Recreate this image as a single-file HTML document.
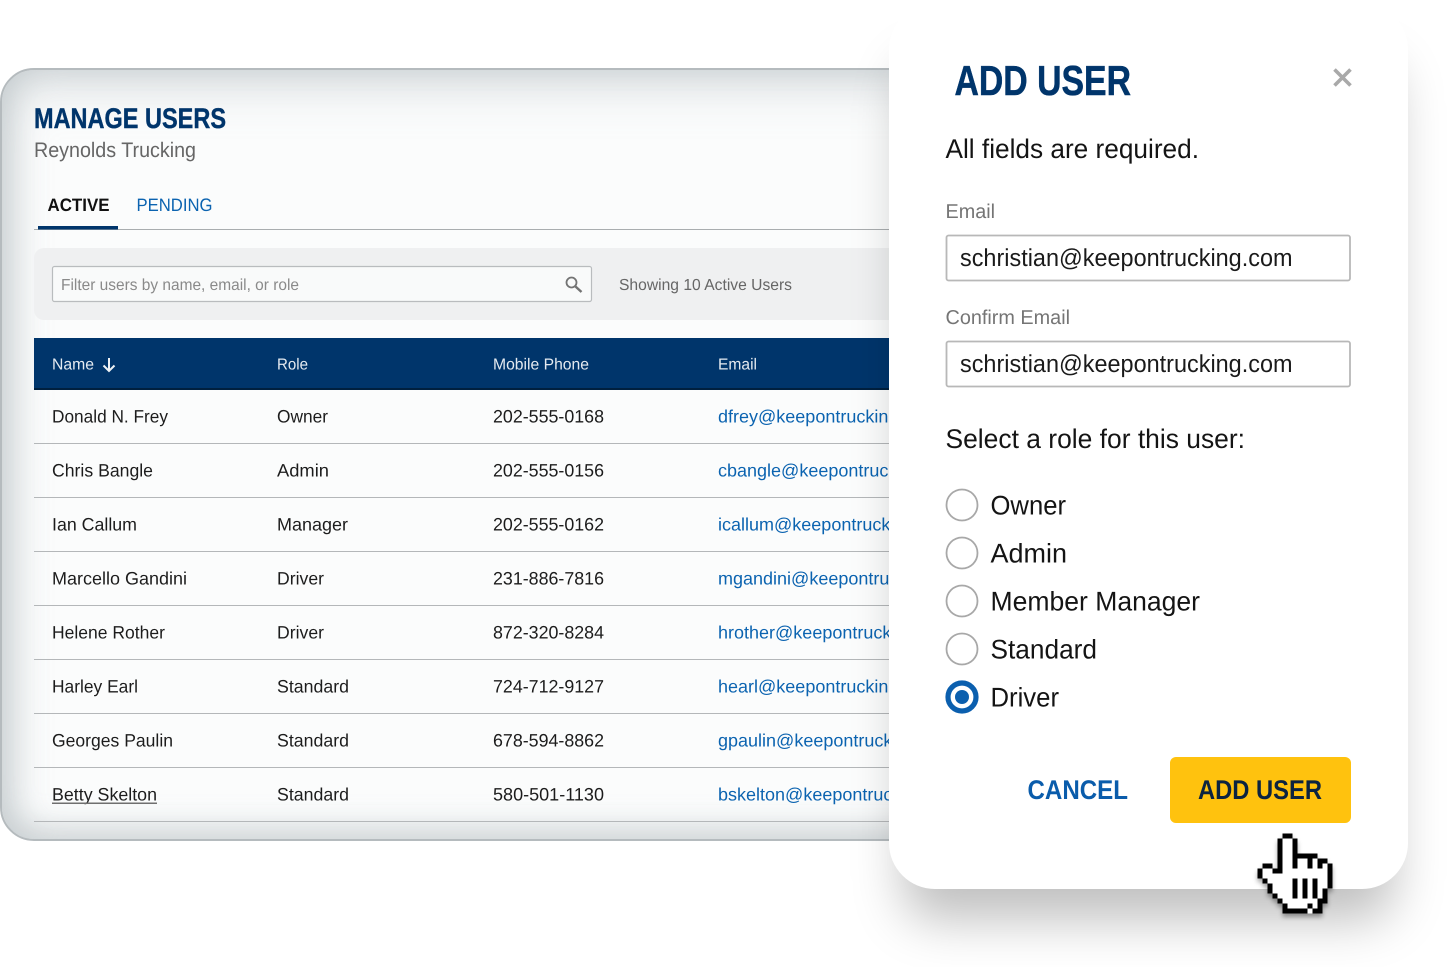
<!DOCTYPE html>
<html lang="en">
<head>
<meta charset="utf-8">
<title>Manage Users</title>
<style>
html,body{margin:0;padding:0;background:#fff;width:1452px;height:967px;overflow:hidden}
#panel{position:absolute;left:0;top:68px;width:1000px;height:773px;box-sizing:border-box;border:2px solid #b5bbbe;border-radius:34px;background:#fbfcfc;box-shadow:inset 0 16px 48px rgba(175,184,188,.42),inset 12px 0 32px rgba(175,184,188,.34),inset 0 -12px 30px rgba(175,184,188,.34)}
#modal{position:absolute;left:889px;top:3px;width:519px;height:886px;background:#fff;border-radius:46px;box-shadow:0 45px 50px -14px rgba(0,0,0,.25)}
svg{position:absolute;left:0;top:0}
text{font-family:"Liberation Sans",Arial,sans-serif;text-rendering:geometricPrecision}
.t{font-size:18px;fill:#1c1c1c}
.e{font-size:18px;fill:#0b63b0}
.h{font-size:16px;fill:#e4eaf0}
.l{font-size:27px;fill:#141414}
</style>
</head>
<body>
<div id="panel"></div>
<svg width="1452" height="967" viewBox="0 0 1452 967">
  <text x="34" y="128" font-size="28.500" font-weight="700" fill="#00356b" stroke="#00356b" stroke-width=".4" textLength="192" lengthAdjust="spacingAndGlyphs">MANAGE USERS</text>
  <text x="34" y="157" font-size="21" fill="#666" textLength="162" lengthAdjust="spacingAndGlyphs">Reynolds Trucking</text>
  <text x="47.500" y="211" font-size="18" font-weight="700" fill="#111" textLength="62" lengthAdjust="spacingAndGlyphs">ACTIVE</text>
  <text x="136.500" y="211" font-size="18" fill="#0b63b0" textLength="76" lengthAdjust="spacingAndGlyphs">PENDING</text>
  <rect x="34" y="229" width="860" height="1" fill="#a9adaf"/>
  <rect x="38" y="226" width="80" height="3.500" fill="#00356b"/>
  <rect x="34" y="248" width="880" height="72" rx="10" fill="#eff0f1"/>
  <rect x="52.500" y="266.500" width="539" height="35" rx="2" fill="#f9fafa" stroke="#b9bcbe" stroke-width="1.200"/>
  <text x="61" y="290" font-size="16" fill="#8a8a8a" textLength="238" lengthAdjust="spacingAndGlyphs">Filter users by name, email, or role</text>
  <circle cx="571.500" cy="282.500" r="5" fill="none" stroke="#737373" stroke-width="1.800"/>
  <path d="M575.500 286.500L581.500 292" fill="none" stroke="#737373" stroke-width="2.400"/>
  <text x="619" y="290" font-size="16" fill="#666" textLength="173" lengthAdjust="spacingAndGlyphs">Showing 10 Active Users</text>

  <rect x="34" y="338" width="860" height="50" fill="#00356b"/>
  <rect x="34" y="388" width="860" height="2" fill="#00203f"/>
  <text class="h" x="52" y="369.500" textLength="42" lengthAdjust="spacingAndGlyphs">Name</text>
  <path d="M109 358V371M103.500 365.500L109 371L114.500 365.500" fill="none" stroke="#eef2f5" stroke-width="2"/>
  <text class="h" x="277" y="369.500" textLength="31" lengthAdjust="spacingAndGlyphs">Role</text>
  <text class="h" x="493" y="369.500" textLength="96" lengthAdjust="spacingAndGlyphs">Mobile Phone</text>
  <text class="h" x="718" y="369.500" textLength="39" lengthAdjust="spacingAndGlyphs">Email</text>

  <g fill="#b4b7b9">
    <rect x="34" y="443" width="860" height="1"/><rect x="34" y="497" width="860" height="1"/>
    <rect x="34" y="551" width="860" height="1"/><rect x="34" y="605" width="860" height="1"/>
    <rect x="34" y="659" width="860" height="1"/><rect x="34" y="713" width="860" height="1"/>
    <rect x="34" y="767" width="860" height="1"/><rect x="34" y="821" width="860" height="1"/>
  </g>

  <text class="t" x="52" y="422.500" textLength="116" lengthAdjust="spacingAndGlyphs">Donald N. Frey</text>
  <text class="t" x="277" y="422.500" textLength="51" lengthAdjust="spacingAndGlyphs">Owner</text>
  <text class="t" x="493" y="422.500" textLength="111" lengthAdjust="spacingAndGlyphs">202-555-0168</text>
  <text class="e" x="718" y="422.500">dfrey@keepontrucking.com</text>

  <text class="t" x="52" y="476.500" textLength="101" lengthAdjust="spacingAndGlyphs">Chris Bangle</text>
  <text class="t" x="277" y="476.500" textLength="52" lengthAdjust="spacingAndGlyphs">Admin</text>
  <text class="t" x="493" y="476.500" textLength="111" lengthAdjust="spacingAndGlyphs">202-555-0156</text>
  <text class="e" x="718" y="476.500">cbangle@keepontrucking.com</text>

  <text class="t" x="52" y="530.500" textLength="85" lengthAdjust="spacingAndGlyphs">Ian Callum</text>
  <text class="t" x="277" y="530.500" textLength="71" lengthAdjust="spacingAndGlyphs">Manager</text>
  <text class="t" x="493" y="530.500" textLength="111" lengthAdjust="spacingAndGlyphs">202-555-0162</text>
  <text class="e" x="718" y="530.500">icallum@keepontrucking.com</text>

  <text class="t" x="52" y="584.500" textLength="135" lengthAdjust="spacingAndGlyphs">Marcello Gandini</text>
  <text class="t" x="277" y="584.500" textLength="47" lengthAdjust="spacingAndGlyphs">Driver</text>
  <text class="t" x="493" y="584.500" textLength="111" lengthAdjust="spacingAndGlyphs">231-886-7816</text>
  <text class="e" x="718" y="584.500">mgandini@keepontrucking.com</text>

  <text class="t" x="52" y="638.500" textLength="113" lengthAdjust="spacingAndGlyphs">Helene Rother</text>
  <text class="t" x="277" y="638.500" textLength="47" lengthAdjust="spacingAndGlyphs">Driver</text>
  <text class="t" x="493" y="638.500" textLength="111" lengthAdjust="spacingAndGlyphs">872-320-8284</text>
  <text class="e" x="718" y="638.500">hrother@keepontrucking.com</text>

  <text class="t" x="52" y="692.500" textLength="86" lengthAdjust="spacingAndGlyphs">Harley Earl</text>
  <text class="t" x="277" y="692.500" textLength="72" lengthAdjust="spacingAndGlyphs">Standard</text>
  <text class="t" x="493" y="692.500" textLength="111" lengthAdjust="spacingAndGlyphs">724-712-9127</text>
  <text class="e" x="718" y="692.500">hearl@keepontrucking.com</text>

  <text class="t" x="52" y="746.500" textLength="121" lengthAdjust="spacingAndGlyphs">Georges Paulin</text>
  <text class="t" x="277" y="746.500" textLength="72" lengthAdjust="spacingAndGlyphs">Standard</text>
  <text class="t" x="493" y="746.500" textLength="111" lengthAdjust="spacingAndGlyphs">678-594-8862</text>
  <text class="e" x="718" y="746.500">gpaulin@keepontrucking.com</text>

  <text class="t" x="52" y="800.500" textLength="105" lengthAdjust="spacingAndGlyphs">Betty Skelton</text>
  <rect x="52" y="802.500" width="105" height="1.500" fill="#6f6f6f"/>
  <text class="t" x="277" y="800.500" textLength="72" lengthAdjust="spacingAndGlyphs">Standard</text>
  <text class="t" x="493" y="800.500" textLength="111" lengthAdjust="spacingAndGlyphs">580-501-1130</text>
  <text class="e" x="718" y="800.500">bskelton@keepontrucking.com</text>
</svg>

<div id="modal"></div>

<svg width="1452" height="967" viewBox="0 0 1452 967">
  <defs>
    <filter id="hs" x="-30%" y="-30%" width="160%" height="170%">
      <feDropShadow dx="0" dy=".7" stdDeviation=".5" flood-color="#000" flood-opacity=".35"/>
    </filter>
  </defs>
  <text x="954.500" y="95" font-size="42" font-weight="700" fill="#00356b" stroke="#00356b" stroke-width=".5" textLength="176.500" lengthAdjust="spacingAndGlyphs">ADD USER</text>
  <path d="M1334.500 69.500L1350.500 85.500M1350.500 69.500L1334.500 85.500" stroke="#a9a9a9" stroke-width="3.600" fill="none"/>
  <text class="l" x="945.500" y="158" textLength="253.500" lengthAdjust="spacingAndGlyphs">All fields are required.</text>

  <text x="945.500" y="218" font-size="20" fill="#757575" textLength="49.500" lengthAdjust="spacingAndGlyphs">Email</text>
  <rect x="946.500" y="235.500" width="403.500" height="45" rx="2" fill="#fff" stroke="#b8b8b8" stroke-width="1.800"/>
  <text x="960" y="266" font-size="24.500" fill="#1a1a1a" textLength="332.500" lengthAdjust="spacingAndGlyphs">schristian@keepontrucking.com</text>

  <text x="945.500" y="324" font-size="20" fill="#757575" textLength="124.500" lengthAdjust="spacingAndGlyphs">Confirm Email</text>
  <rect x="946.500" y="341.500" width="403.500" height="45" rx="2" fill="#fff" stroke="#b8b8b8" stroke-width="1.800"/>
  <text x="960" y="372" font-size="24.500" fill="#1a1a1a" textLength="332.500" lengthAdjust="spacingAndGlyphs">schristian@keepontrucking.com</text>

  <text class="l" x="945.500" y="448" textLength="299.500" lengthAdjust="spacingAndGlyphs">Select a role for this user:</text>

  <g fill="#fff" stroke="#a8a8a8" stroke-width="1.800">
    <circle cx="962" cy="505" r="15.500"/>
    <circle cx="962" cy="553" r="15.500"/>
    <circle cx="962" cy="601" r="15.500"/>
    <circle cx="962" cy="649" r="15.500"/>
  </g>
  <circle cx="962" cy="697" r="14" fill="#fff" stroke="#0b5fae" stroke-width="5.200"/>
  <circle cx="962" cy="697" r="7" fill="#0b5fae"/>
  <text class="l" x="990.500" y="514.500" textLength="75.500" lengthAdjust="spacingAndGlyphs">Owner</text>
  <text class="l" x="990.500" y="562.500" textLength="76.500" lengthAdjust="spacingAndGlyphs">Admin</text>
  <text class="l" x="990.500" y="610.500" textLength="209.500" lengthAdjust="spacingAndGlyphs">Member Manager</text>
  <text class="l" x="990.500" y="658.500" textLength="106.500" lengthAdjust="spacingAndGlyphs">Standard</text>
  <text class="l" x="990.500" y="706.500" textLength="68.500" lengthAdjust="spacingAndGlyphs">Driver</text>

  <text x="1027.500" y="799" font-size="27" font-weight="700" fill="#0a5cab" textLength="100.500" lengthAdjust="spacingAndGlyphs">CANCEL</text>
  <rect x="1170" y="757" width="181" height="66" rx="6" fill="#ffc20e"/>
  <text x="1198" y="799" font-size="27" font-weight="700" fill="#0c2340" textLength="124" lengthAdjust="spacingAndGlyphs">ADD USER</text>

  <g transform="translate(1257.300 833.300) scale(5)" filter="url(#hs)" shape-rendering="crispEdges">
    <path fill="#fff" d="M5 1H8V4H12V5H14V6H15V11H14V14H13V16H5V14H4V13H3V12H2V10H1V8H0V7H1V6H3V7H4V1Z"/>
    <path fill="#000" d="M5 0h2v1h-2zM4 1h1v7h-1zM7 1h1v6h-1zM8 4h4v1h-4zM10 5h1v2h-1zM12 5h2v1h-2zM12 6h1v1h-1zM14 6h1v5h-1zM1 6h2v1h-2zM0 7h1v2h-1zM3 7h1v1h-1zM1 9h1v1h-1zM2 10h1v2h-1zM3 12h1v1h-1zM4 13h1v1h-1zM5 14h1v1h-1zM5 15h5v1h-5zM7 9h1v4h-1zM9 9h1v4h-1zM11 9h1v4h-1zM13 11h1v3h-1zM12 13h1v3h-1zM10 14h1v1h-1zM11 15h1v1h-1z"/>
  </g>
</svg>
</body>
</html>
